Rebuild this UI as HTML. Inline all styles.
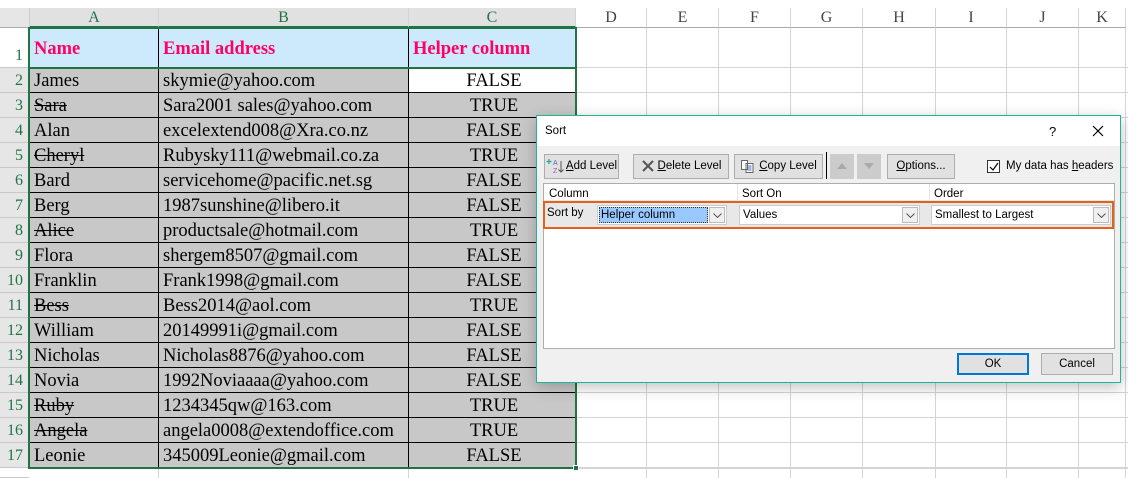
<!DOCTYPE html>
<html><head><meta charset="utf-8"><style>
*{margin:0;padding:0;box-sizing:border-box}
body{width:1128px;height:478px;overflow:hidden;background:#fff;position:relative;font-family:"Liberation Serif",serif}
.a{position:absolute}
.ch{position:absolute;top:8px;height:20px;font-size:16px;text-align:center;line-height:20px;color:#444;border-right:1px solid #d4d4d4;border-bottom:1px solid #aaa}
.vl{position:absolute;top:28px;height:450px;width:1px;background:#d4d4d4}
.hl{position:absolute;left:576px;width:552px;height:1px;background:#d4d4d4}
.rn{position:absolute;left:0;width:29px;background:#e6e6e6;color:#217346;font-size:16px;text-align:right;padding-right:6px;border-bottom:1px solid #c8c8c8}
.c{position:absolute;height:25px;background:#c8c8c8;font-size:18.5px;line-height:27px;border-bottom:1px solid #000;border-right:1px solid #000;padding-left:4px;color:#000;white-space:nowrap;overflow:hidden}
.s{text-decoration:line-through}
.d{font-family:"Liberation Sans",sans-serif;font-size:11.5px;color:#000;white-space:nowrap}
.btn{position:absolute;top:154px;height:25px;background:#e1e1e1;border:1px solid #adadad;font-family:"Liberation Sans",sans-serif;font-size:11.5px;line-height:23px;text-align:center;white-space:nowrap}
svg{vertical-align:middle}
</style></head><body>
<div class="a" style="left:0;top:8px;width:30px;height:20px;background:#e6e6e6;border-right:1px solid #ccc;border-bottom:1px solid #aaa"></div>
<div class="ch" style="left:30px;width:129px;background:#e1e1e1;color:#217346;border-bottom:2px solid #217346">A</div>
<div class="ch" style="left:159px;width:250px;background:#e1e1e1;color:#217346;border-bottom:2px solid #217346">B</div>
<div class="ch" style="left:409px;width:167px;background:#e1e1e1;color:#217346;border-bottom:2px solid #217346">C</div>
<div class="ch" style="left:576px;width:71px">D</div>
<div class="ch" style="left:647px;width:72px">E</div>
<div class="ch" style="left:719px;width:72px">F</div>
<div class="ch" style="left:791px;width:72px">G</div>
<div class="ch" style="left:863px;width:73px">H</div>
<div class="ch" style="left:936px;width:71px">I</div>
<div class="ch" style="left:1007px;width:72px">J</div>
<div class="ch" style="left:1079px;width:47px">K</div>
<div class="vl" style="left:646px"></div><div class="vl" style="left:718px"></div><div class="vl" style="left:790px"></div><div class="vl" style="left:862px"></div><div class="vl" style="left:935px"></div><div class="vl" style="left:1006px"></div><div class="vl" style="left:1078px"></div><div class="vl" style="left:1125px"></div>
<div class="hl" style="top:67px"></div><div class="hl" style="top:92px"></div><div class="hl" style="top:117px"></div><div class="hl" style="top:142px"></div><div class="hl" style="top:167px"></div><div class="hl" style="top:192px"></div><div class="hl" style="top:217px"></div><div class="hl" style="top:242px"></div><div class="hl" style="top:267px"></div><div class="hl" style="top:292px"></div><div class="hl" style="top:317px"></div><div class="hl" style="top:342px"></div><div class="hl" style="top:367px"></div><div class="hl" style="top:392px"></div><div class="hl" style="top:417px"></div><div class="hl" style="top:442px"></div><div class="hl" style="top:467px"></div>
<div class="a" style="left:0;top:468px;width:1128px;height:1px;background:#d4d4d4"></div>
<div class="a" style="left:158px;top:468px;width:1px;height:10px;background:#d4d4d4"></div>
<div class="a" style="left:408px;top:468px;width:1px;height:10px;background:#d4d4d4"></div>
<div class="rn" style="top:28px;height:40px;line-height:56px;background:#fff">1</div>
<div class="c" style="left:30px;top:28px;width:129px;height:40px;background:#cdeafc;line-height:42px;color:#ff0066;font-weight:bold">Name</div>
<div class="c" style="left:159px;top:28px;width:250px;height:40px;background:#cdeafc;line-height:42px;color:#ff0066;font-weight:bold">Email address</div>
<div class="c" style="left:409px;top:28px;width:167px;height:40px;background:#cdeafc;line-height:42px;color:#ff0066;font-weight:bold">Helper column</div>

<div class="rn" style="top:68px;height:25px;line-height:25px">2</div><div class="c" style="left:30px;top:68px;width:129px">James</div><div class="c" style="left:159px;top:68px;width:250px">skymie@yahoo.com</div><div class="c" style="left:409px;top:68px;width:167px;text-align:center;background:#fff">FALSE</div>
<div class="rn" style="top:93px;height:25px;line-height:25px">3</div><div class="c s" style="left:30px;top:93px;width:129px">Sara</div><div class="c" style="left:159px;top:93px;width:250px">Sara2001 sales@yahoo.com</div><div class="c" style="left:409px;top:93px;width:167px;text-align:center">TRUE</div>
<div class="rn" style="top:118px;height:25px;line-height:25px">4</div><div class="c" style="left:30px;top:118px;width:129px">Alan</div><div class="c" style="left:159px;top:118px;width:250px">excelextend008@Xra.co.nz</div><div class="c" style="left:409px;top:118px;width:167px;text-align:center">FALSE</div>
<div class="rn" style="top:143px;height:25px;line-height:25px">5</div><div class="c s" style="left:30px;top:143px;width:129px">Cheryl</div><div class="c" style="left:159px;top:143px;width:250px">Rubysky111@webmail.co.za</div><div class="c" style="left:409px;top:143px;width:167px;text-align:center">TRUE</div>
<div class="rn" style="top:168px;height:25px;line-height:25px">6</div><div class="c" style="left:30px;top:168px;width:129px">Bard</div><div class="c" style="left:159px;top:168px;width:250px">servicehome@pacific.net.sg</div><div class="c" style="left:409px;top:168px;width:167px;text-align:center">FALSE</div>
<div class="rn" style="top:193px;height:25px;line-height:25px">7</div><div class="c" style="left:30px;top:193px;width:129px">Berg</div><div class="c" style="left:159px;top:193px;width:250px">1987sunshine@libero.it</div><div class="c" style="left:409px;top:193px;width:167px;text-align:center">FALSE</div>
<div class="rn" style="top:218px;height:25px;line-height:25px">8</div><div class="c s" style="left:30px;top:218px;width:129px">Alice</div><div class="c" style="left:159px;top:218px;width:250px">productsale@hotmail.com</div><div class="c" style="left:409px;top:218px;width:167px;text-align:center">TRUE</div>
<div class="rn" style="top:243px;height:25px;line-height:25px">9</div><div class="c" style="left:30px;top:243px;width:129px">Flora</div><div class="c" style="left:159px;top:243px;width:250px">shergem8507@gmail.com</div><div class="c" style="left:409px;top:243px;width:167px;text-align:center">FALSE</div>
<div class="rn" style="top:268px;height:25px;line-height:25px">10</div><div class="c" style="left:30px;top:268px;width:129px">Franklin</div><div class="c" style="left:159px;top:268px;width:250px">Frank1998@gmail.com</div><div class="c" style="left:409px;top:268px;width:167px;text-align:center">FALSE</div>
<div class="rn" style="top:293px;height:25px;line-height:25px">11</div><div class="c s" style="left:30px;top:293px;width:129px">Bess</div><div class="c" style="left:159px;top:293px;width:250px">Bess2014@aol.com</div><div class="c" style="left:409px;top:293px;width:167px;text-align:center">TRUE</div>
<div class="rn" style="top:318px;height:25px;line-height:25px">12</div><div class="c" style="left:30px;top:318px;width:129px">William</div><div class="c" style="left:159px;top:318px;width:250px">20149991i@gmail.com</div><div class="c" style="left:409px;top:318px;width:167px;text-align:center">FALSE</div>
<div class="rn" style="top:343px;height:25px;line-height:25px">13</div><div class="c" style="left:30px;top:343px;width:129px">Nicholas</div><div class="c" style="left:159px;top:343px;width:250px">Nicholas8876@yahoo.com</div><div class="c" style="left:409px;top:343px;width:167px;text-align:center">FALSE</div>
<div class="rn" style="top:368px;height:25px;line-height:25px">14</div><div class="c" style="left:30px;top:368px;width:129px">Novia</div><div class="c" style="left:159px;top:368px;width:250px">1992Noviaaaa@yahoo.com</div><div class="c" style="left:409px;top:368px;width:167px;text-align:center">FALSE</div>
<div class="rn" style="top:393px;height:25px;line-height:25px">15</div><div class="c s" style="left:30px;top:393px;width:129px">Ruby</div><div class="c" style="left:159px;top:393px;width:250px">1234345qw@163.com</div><div class="c" style="left:409px;top:393px;width:167px;text-align:center">TRUE</div>
<div class="rn" style="top:418px;height:25px;line-height:25px">16</div><div class="c s" style="left:30px;top:418px;width:129px">Angela</div><div class="c" style="left:159px;top:418px;width:250px">angela0008@extendoffice.com</div><div class="c" style="left:409px;top:418px;width:167px;text-align:center">TRUE</div>
<div class="rn" style="top:443px;height:25px;line-height:25px">17</div><div class="c" style="left:30px;top:443px;width:129px">Leonie</div><div class="c" style="left:159px;top:443px;width:250px">345009Leonie@gmail.com</div><div class="c" style="left:409px;top:443px;width:167px;text-align:center">FALSE</div>
<div class="rn" style="top:468px;height:10px;background:#fff"></div>
<div class="a" style="left:28px;top:27px;width:549px;height:42px;border:2px solid #217346"></div>
<div class="a" style="left:28px;top:67px;width:549px;height:402px;border:2px solid #217346"></div>
<div class="a" style="left:573px;top:465px;width:6px;height:6px;background:#217346;border:1px solid #fff"></div>

<div class="a" style="left:536px;top:115px;width:585px;height:268px;background:#f0f0f0;border:1px solid #1fb496;box-shadow:0 4px 14px rgba(0,0,0,.25)">
 <div class="a" style="left:0;top:0;width:583px;height:30px;background:#fff"></div>
 <div class="a d" style="left:8px;top:9px">Sort</div>
 <div class="a d" style="left:512px;top:8px;font-size:13px">?</div>
 <svg class="a" style="left:555px;top:9px" width="12" height="12"><path d="M1 1L11 11M11 1L1 11" stroke="#000" stroke-width="1.2"/></svg>
</div>
<div class="btn" style="left:544px;width:75px"><svg width="18" height="18" style="margin-right:2px"><path d="M3 2v5M0.5 4.5h5" stroke="#2a9" stroke-width="1.3"/><text x="7" y="8" font-size="7" fill="#4a6fc0" font-family="Liberation Sans">A</text><text x="7" y="16" font-size="7" fill="#9b59b6" font-family="Liberation Sans">Z</text><path d="M15 4v11M12.5 12.5l2.5 2.5 2.5-2.5" stroke="#555" fill="none" stroke-width="1"/></svg><u>A</u>dd Level</div>
<div class="btn" style="left:633px;width:96px"><svg width="14" height="14" style="margin-right:3px"><path d="M2 2L12 12M12 2L2 12" stroke="#555" stroke-width="2"/></svg><u>D</u>elete Level</div>
<div class="btn" style="left:734px;width:89px"><svg width="16" height="14" style="margin-right:3px"><path d="M1.5 1.5h6v9h-6z M6 4.5h7v9H6z" fill="#fff" stroke="#666"/><path d="M7.5 7h4M7.5 9h4M7.5 11h4" stroke="#4a6fc0"/></svg><u>C</u>opy Level</div>
<div class="a" style="left:826px;top:152px;width:1px;height:27px;background:#000"></div>
<div class="btn" style="left:830px;width:24px;background:#ccc;border-color:#ccc"><svg width="10" height="8"><path d="M0 7L5 1L10 7z" fill="#aaa"/></svg></div>
<div class="btn" style="left:857px;width:24px;background:#ccc;border-color:#ccc"><svg width="10" height="8"><path d="M0 1L5 7L10 1z" fill="#aaa"/></svg></div>
<div class="btn" style="left:887px;width:68px"><u>O</u>ptions...</div>
<div class="a" style="left:987px;top:160px;width:13px;height:13px;border:1px solid #333;background:#fff"><svg class="a" style="left:1px;top:1px" width="10" height="10"><path d="M1 5l3 3 5-7" stroke="#000" fill="none" stroke-width="1.2"/></svg></div>
<div class="a d" style="left:1006px;top:160px">My data has <u>h</u>eaders</div>
<div class="a" style="left:543px;top:183px;width:572px;height:166px;background:#fff;border:1px solid #adadad"></div>
<div class="a" style="left:544px;top:184px;width:570px;height:17px;background:#fff;border-bottom:1px solid #e5e5e5"></div>
<div class="a" style="left:737px;top:184px;width:1px;height:17px;background:#e5e5e5"></div>
<div class="a" style="left:929px;top:184px;width:1px;height:17px;background:#e5e5e5"></div>
<div class="a d" style="left:549px;top:188px">Column</div>
<div class="a d" style="left:742px;top:188px">Sort On</div>
<div class="a d" style="left:934px;top:188px">Order</div>
<div class="a" style="left:543px;top:201px;width:571px;height:28px;background:#e8e8e8;border:2px solid #e2621a"></div>
<div class="a d" style="left:547px;top:207px">Sort by</div>
<div class="a" style="left:597px;top:205px;width:130px;height:20px;background:#fff;border:1px solid #ccc"><div class="a" style="left:1px;top:1px;width:109px;height:16px;background:#99c9ff;border:1px dotted #333"></div><div class="a d" style="left:3px;top:3px">Helper column</div><div class="a" style="left:111px;top:1px;width:16px;height:16px;border:1px solid #bbb;background:#f0f0f0"><svg class="a" style="left:3px;top:5px" width="9" height="5"><path d="M0.5 0.5L4.5 4.5L8.5 0.5" stroke="#555" fill="none"/></svg></div></div>
<div class="a" style="left:739px;top:205px;width:181px;height:20px;background:#fff;border:1px solid #ccc"><div class="a d" style="left:3px;top:3px">Values</div><div class="a" style="left:162px;top:1px;width:16px;height:16px;border:1px solid #bbb;background:#f0f0f0"><svg class="a" style="left:3px;top:5px" width="9" height="5"><path d="M0.5 0.5L4.5 4.5L8.5 0.5" stroke="#555" fill="none"/></svg></div></div>
<div class="a" style="left:931px;top:205px;width:180px;height:20px;background:#fff;border:1px solid #ccc"><div class="a d" style="left:3px;top:3px">Smallest to Largest</div><div class="a" style="left:161px;top:1px;width:16px;height:16px;border:1px solid #bbb;background:#f0f0f0"><svg class="a" style="left:3px;top:5px" width="9" height="5"><path d="M0.5 0.5L4.5 4.5L8.5 0.5" stroke="#555" fill="none"/></svg></div></div>
<div class="btn" style="left:957px;top:353px;width:72px;height:22px;line-height:18px;border:2px solid #0078d7">OK</div>
<div class="btn" style="left:1041px;top:353px;width:72px;height:22px;line-height:20px">Cancel</div>
</body></html>
